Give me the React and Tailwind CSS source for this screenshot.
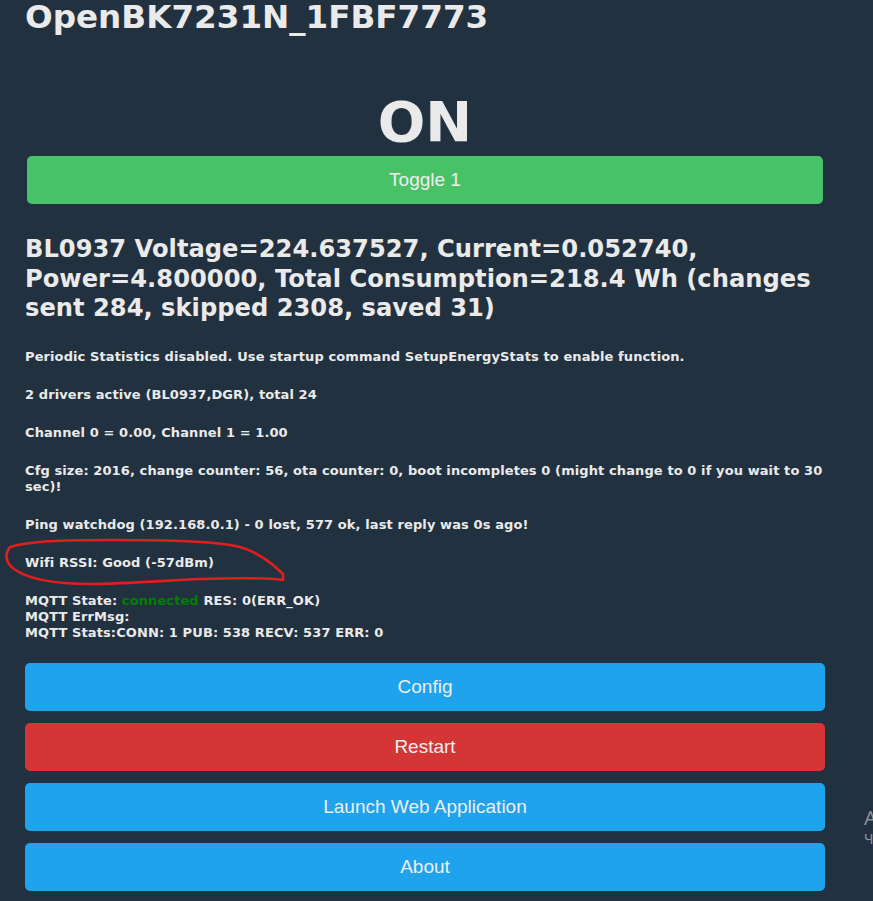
import React from "react";

const para = "text-[13px] font-bold leading-[16px] tracking-[0.1px]";
const btn =
  "block h-12 w-full rounded-[5px] text-center text-[19px] leading-[48px] text-[#eeeeee]";

export default function App() {
  return (
    <div
      className="relative h-[901px] w-full overflow-hidden bg-[#22313f] text-[#eaeaea]"
      style={{ fontFamily: '"DejaVu Sans", Verdana, sans-serif' }}
    >
      <div className="w-[800px] pl-[25px] box-content">
        <h1 className="-mt-[3px] text-[32.6px] font-bold leading-[40px]">OpenBK7231N_1FBF7773</h1>

        <div className="mt-[53px] text-center text-[56px] font-bold leading-[64px]">ON</div>

        <div className="mt-[2px] px-[2px]">
          <button className={`${btn} bg-[#47c266]`} style={{ fontFamily: '"Liberation Sans", Arial, sans-serif' }}>
            Toggle 1
          </button>
        </div>

        <h3 className="mt-[31px] text-[24.2px] font-bold leading-[29.5px]">
          BL0937 Voltage=224.637527, Current=0.052740, Power=4.800000, Total Consumption=218.4 Wh (changes sent
          284, skipped 2308, saved 31)
        </h3>

        <div className="mt-[25px] flex flex-col gap-[22px]">
          <p className={para}>Periodic Statistics disabled. Use startup command SetupEnergyStats to enable function.</p>
          <p className={para}>2 drivers active (BL0937,DGR), total 24</p>
          <p className={para}>Channel 0 = 0.00, Channel 1 = 1.00</p>
          <p className={para}>
            Cfg size: 2016, change counter: 56, ota counter: 0, boot incompletes 0 (might change to 0 if you wait to 30
            sec)!
          </p>
          <p className={para}>Ping watchdog (192.168.0.1) - 0 lost, 577 ok, last reply was 0s ago!</p>
          <div className="relative">
            <p className={para}>Wifi RSSI: Good (-57dBm)</p>
            <svg
              className="pointer-events-none absolute left-[-25px] top-[-22px]"
              width="300"
              height="60"
              viewBox="0 0 300 60"
              fill="none"
            >
              <path
                d="M10 14 C30 8 60 7 110 7 C170 7 215 8 240 14 C258 19 272 30 283 41 L283 47 C260 44 230 45 200 46 C160 48 120 51 90 51 C55 51 28 46 14 36 C6 30 4 22 10 14 Z"
                stroke="#e01e1e"
                strokeWidth="2.6"
                strokeLinecap="round"
                strokeLinejoin="round"
              />
            </svg>
          </div>
          <div className={para}>
            <div>
              MQTT State: <span className="text-[#008000]">connected</span> RES: 0(ERR_OK)
            </div>
            <div>MQTT ErrMsg:</div>
            <div>MQTT Stats:CONN: 1 PUB: 538 RECV: 537 ERR: 0</div>
          </div>
        </div>

        <div
          className="mt-[22px] flex flex-col gap-3"
          style={{ fontFamily: '"Liberation Sans", Arial, sans-serif' }}
        >
          <button className={`${btn} bg-[#1fa3ec]`}>Config</button>
          <button className={`${btn} bg-[#d43535]`}>Restart</button>
          <button className={`${btn} bg-[#1fa3ec]`}>Launch Web Application</button>
          <button className={`${btn} bg-[#1fa3ec]`}>About</button>
        </div>
      </div>

      <div
        className="absolute left-[864px] top-[806px] whitespace-nowrap text-[#8b939c]"
        style={{ fontFamily: '"Noto Sans", sans-serif' }}
      >
        <div className="text-[20px] leading-[24px]">Активация Windows</div>
        <div className="text-[14px] leading-[18px]">Чтобы активировать Windows, перейдите в раздел «Параметры».</div>
      </div>
    </div>
  );
}
